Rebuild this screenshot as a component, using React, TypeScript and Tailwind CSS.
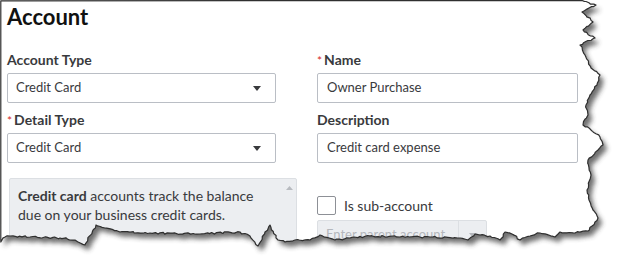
import React from "react";

const RIGHT: [number, number][] = [
  [582, 0.5], [596, 5], [582, 12], [593, 22], [583, 30], [595, 38], [580, 45], [585, 55], [591, 68], [600, 75],
  [597, 85], [590, 95], [586, 105], [588, 115], [583, 125], [591, 130], [600, 137], [603, 145], [598, 150],
  [588, 160], [591, 175], [587, 190], [589, 200], [593, 210], [598, 218], [592, 226], [588, 231],
];
const BOTTOM: [number, number][] = [
  [575, 233], [560, 232], [555, 237], [540, 233], [530, 236], [520, 240], [512, 234], [505, 232], [500, 240],
  [490, 236], [480, 235], [475, 234], [468, 240], [460, 238], [430, 237], [400, 237], [370, 236], [350, 238],
  [335, 240], [320, 235], [310, 240], [295, 240], [285, 242], [278, 240], [270, 225], [265, 232], [258, 246],
  [250, 236], [240, 232], [200, 234], [150, 233], [120, 232], [105, 228], [96, 225], [85, 245], [75, 240],
  [60, 238], [30, 237], [10, 236], [5, 237], [0.75, 242],
];

function buildPoints(): string {
  const key: [number, number][] = [[0.75, 0.75], ...RIGHT, ...BOTTOM];
  let seed = 7;
  const rnd = () => {
    seed = (seed * 9301 + 49297) % 233280;
    return seed / 233280 - 0.5;
  };
  const out: [number, number][] = [[0.75, 0.75]];
  for (let i = 1; i < key.length; i++) {
    const [x0, y0] = key[i - 1];
    const [x1, y1] = key[i];
    const len = Math.hypot(x1 - x0, y1 - y0);
    const n = i === 1 ? 1 : Math.max(1, Math.round(len / 2.5));
    for (let k = 1; k <= n; k++) {
      const t = k / n;
      let x = x0 + (x1 - x0) * t;
      let y = y0 + (y1 - y0) * t;
      if (k < n && i > 1) {
        x += rnd() * 1.8;
        y += rnd() * 1.8;
      }
      out.push([x, y]);
    }
  }
  return out.map(([x, y]) => `${x.toFixed(1)},${y.toFixed(1)}`).join(" ");
}

const PTS = buildPoints();

function Caret({ color = "#393a3d" }: { color?: string }) {
  return (
    <svg width="8" height="5" viewBox="0 0 8 5">
      <path d="M0 0 L8 0 L4 5 Z" fill={color} />
    </svg>
  );
}

function Select({ value }: { value: string }) {
  return (
    <div className="flex h-[30px] w-[269px] items-center justify-between rounded-[2px] border border-[#babec5] bg-white pl-[8px] pr-[14px] text-[13px] text-[#393a3d]">
      <span>{value}</span>
      <Caret />
    </div>
  );
}

function Input({ value }: { value: string }) {
  return (
    <div className="flex h-[30px] w-[261px] items-center rounded-[2px] border border-[#babec5] bg-white pl-[9px] text-[13px] text-[#393a3d]">
      {value}
    </div>
  );
}

function Label({ text, required }: { text: string; required?: boolean }) {
  return (
    <div className="flex h-[18px] items-baseline text-[14px] font-bold leading-[18px] text-[#393a3d]">
      {required && <span className="mr-[2px] text-[12px] font-normal text-[#d52b1e]">*</span>}
      {text}
    </div>
  );
}

export default function App() {
  return (
    <div className="relative h-[270px] w-[624px] overflow-hidden bg-white font-['Lato','Open_Sans',sans-serif] text-[#393a3d]">
      <div className="pl-[7px] pt-[3px]">
        <h1 className="text-[22px] font-bold leading-[28px] text-[#111]">Account</h1>
        <div className="mt-[20px] grid grid-cols-[290px_262px] gap-x-[20px]">
          <div className="flex flex-col">
            <Label text="Account Type" />
            <div className="mt-[4px]">
              <Select value="Credit Card" />
            </div>
            <div className="mt-[8px]">
              <Label text="Detail Type" required />
            </div>
            <div className="mt-[4px]">
              <Select value="Credit Card" />
            </div>
            <div className="ml-[2px] mt-[15px] flex h-[80px] w-[288px] rounded-[2px] border border-[#dcdfe3] bg-[#eceef1]">
              <div className="flex-1 pl-[8px] pr-[6px] pt-[7px] text-[14px] leading-[19px] text-[#393a3d]">
                <b className="font-bold">Credit card</b> accounts track the balance due on your business credit cards.
              </div>
              <div className="flex w-[14px] justify-center pt-[7px]">
                <svg width="7" height="4" viewBox="0 0 7 4">
                  <path d="M0 4 L7 4 L3.5 0 Z" fill="#b8bbc0" />
                </svg>
              </div>
            </div>
          </div>
          <div className="flex flex-col">
            <Label text="Name" required />
            <div className="mt-[4px]">
              <Input value="Owner Purchase" />
            </div>
            <div className="mt-[8px]">
              <Label text="Description" />
            </div>
            <div className="mt-[4px]">
              <Input value="Credit card expense" />
            </div>
            <div className="mt-[33px] flex items-center gap-[8px]">
              <div className="h-[19px] w-[19px] rounded-[2px] border border-[#8d9096] bg-white" />
              <span className="text-[14px] leading-[18px] text-[#393a3d]">Is sub-account</span>
            </div>
            <div className="mt-[5px] flex h-[30px] w-[170px] rounded-[2px] border border-[#dcdfe3] bg-[#eceef1]">
              <div className="flex flex-1 items-center border-r border-[#dcdfe3] pl-[8px] text-[13px] text-[#b4b7bc]">
                Enter parent account
              </div>
              <div className="flex w-[27px] items-center justify-center">
                <Caret color="#b4b7bc" />
              </div>
            </div>
          </div>
        </div>
      </div>
      <svg className="absolute left-0 top-0" width="624" height="270" viewBox="0 0 624 270">
        <defs>
          <mask id="outside">
            <rect x="0" y="0" width="624" height="270" fill="white" />
            <polygon points={PTS} fill="black" />
          </mask>
          <filter id="blur" x="-10%" y="-10%" width="120%" height="120%">
            <feGaussianBlur stdDeviation="2.6" />
          </filter>
        </defs>
        <g mask="url(#outside)">
          <rect x="0" y="0" width="624" height="270" fill="white" />
          <polygon points={PTS} transform="translate(4,5)" fill="#333" opacity="0.7" filter="url(#blur)" />
        </g>
        <polygon points={PTS} fill="none" stroke="#2f2f2f" strokeWidth="1.2" strokeLinejoin="round" />
      </svg>
    </div>
  );
}
